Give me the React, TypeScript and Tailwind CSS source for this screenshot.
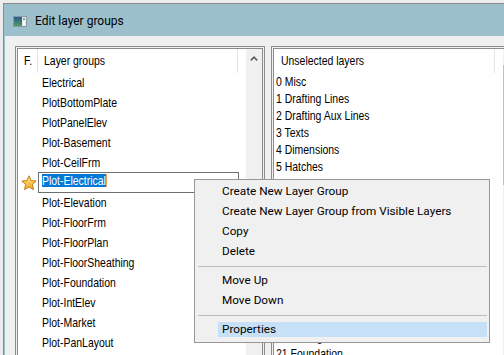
import React from "react";

const groups = [
  "Electrical",
  "PlotBottomPlate",
  "PlotPanelElev",
  "Plot-Basement",
  "Plot-CeilFrm",
  "Plot-Electrical",
  "Plot-Elevation",
  "Plot-FloorFrm",
  "Plot-FloorPlan",
  "Plot-FloorSheathing",
  "Plot-Foundation",
  "Plot-IntElev",
  "Plot-Market",
  "Plot-PanLayout",
  "Plot-Roof",
];

const layers = [
  "0 Misc",
  "1 Drafting Lines",
  "2 Drafting Aux Lines",
  "3 Texts",
  "4 Dimensions",
  "5 Hatches",
  "6 Drawing Grid Lines",
  "7 Reference Lines",
  "8 Symbols",
  "9 Notes",
  "10 Site",
  "11 Structure",
  "12 Walls",
  "13 Roof",
  "14 Floor",
  "20 Ceiling",
  "21 Foundation",
  "22 Framing",
];

const menuItems: (string | null)[] = [
  "Create New Layer Group",
  "Create New Layer Group from Visible Layers",
  "Copy",
  "Delete",
  null,
  "Move Up",
  "Move Down",
  null,
];

// narrow list text (Arial Narrow look from Liberation Sans)
function N({ children }: { children: React.ReactNode }) {
  return <span className="inline-block origin-left scale-x-[0.82] whitespace-nowrap">{children}</span>;
}

function TitleIcon() {
  return (
    <svg width="14" height="11" viewBox="0 0 14 11">
      <defs>
        <linearGradient id="ti" x1="0" y1="0" x2="0" y2="1">
          <stop offset="0" stopColor="#2d5a8c" />
          <stop offset="1" stopColor="#4f9a63" />
        </linearGradient>
      </defs>
      <rect x="0.5" y="0.5" width="13" height="10" fill="#e4e8ea" stroke="#8c99a3" />
      <rect x="1" y="1" width="8" height="9" fill="url(#ti)" />
      <rect x="10" y="2" width="2" height="2" fill="#7fb07f" />
      <rect x="10" y="5" width="2" height="4" fill="#ffffff" />
    </svg>
  );
}

function Star() {
  return (
    <svg width="16" height="16" viewBox="0 0 16 16">
      <defs>
        <linearGradient id="st" x1="0" y1="0" x2="0" y2="1">
          <stop offset="0" stopColor="#ffe98a" />
          <stop offset="1" stopColor="#f2a51f" />
        </linearGradient>
      </defs>
      <polygon
        points="8,0.8 10.1,5.6 15.2,6 11.3,9.4 12.5,14.6 8,11.9 3.5,14.6 4.7,9.4 0.8,6 5.9,5.6"
        fill="url(#st)"
        stroke="#c47a16"
        strokeWidth="1"
        strokeLinejoin="round"
      />
    </svg>
  );
}

function ChevronUp() {
  return (
    <svg width="8" height="5" viewBox="0 0 8 5">
      <path d="M0.8 4.4 L4 1.2 L7.2 4.4" fill="none" stroke="#606060" strokeWidth="1.6" />
    </svg>
  );
}

export default function App() {
  return (
    <div className="w-[504px] h-[355px] overflow-hidden bg-[#ececec] pt-[3px] pl-[3px] relative">
      <div className="h-[400px] border-l border-t border-[#8c8c8c] bg-[#9bc0cc] flex flex-col">
        {/* title bar */}
        <div className="h-[32px] shrink-0 flex items-center pl-[9px] gap-[8px] pt-[2px]">
          <TitleIcon />
          <span className="text-[12px] text-black font-['Roboto',sans-serif]">Edit layer groups</span>
        </div>

        {/* dialog body */}
        <div className="flex-1 ml-px bg-[#f0f0f0] pt-[10px] pl-[10px] flex gap-[6px] font-['Liberation_Sans','Arial',sans-serif] text-[12.75px] text-black">
          {/* layer groups list */}
          <div className="w-[250px] h-[360px] shrink-0 border-[3px] border-double border-[#8c8c8c] bg-white bg-clip-padding flex">
            <div className="w-[228px] shrink-0 flex flex-col">
              <div className="h-[24px] shrink-0 flex">
                <div className="w-[19px] pl-[6px] flex items-center">
                  <N>F.</N>
                </div>
                <div className="w-px h-full bg-[#e5e5e5]" />
                <div className="w-[199px] pl-[6px] flex items-center">
                  <N>Layer groups</N>
                </div>
                <div className="w-px h-full bg-[#e5e5e5]" />
              </div>
              {groups.map((g) =>
                g === "Plot-Electrical" ? (
                  <div key={g} className="h-[20px] flex items-start">
                    <div className="w-[20px] h-[20px] flex items-center justify-center pl-[1px]">
                      <Star />
                    </div>
                    <div className="w-[201px] h-[21px] -mt-px border border-[#6e6e6e] bg-white pl-[3px] pt-[1px] flex items-start">
                      <div className="flex origin-left scale-x-[0.82] whitespace-nowrap">
                        <span className="h-[13px] leading-[13px] bg-[#0078d7] text-white">{g}</span>
                        <span className="w-[1.22px] h-[13px] bg-[#f08020]" />
                      </div>
                    </div>
                  </div>
                ) : (
                  <div key={g} className="h-[20px] flex items-center">
                    <div className="w-[20px]" />
                    <div className="pl-[4px]">
                      <N>{g}</N>
                    </div>
                  </div>
                )
              )}
            </div>
            <div className="w-[16px] shrink-0 bg-[#f0f0f0] flex flex-col items-center pt-[7px]">
              <ChevronUp />
            </div>
          </div>

          {/* unselected layers list */}
          <div className="w-[260px] h-[360px] shrink-0 border-[3px] border-double border-[#8c8c8c] bg-white bg-clip-padding flex">
            <div className="w-[229px] shrink-0 flex flex-col">
              <div className="h-[24px] shrink-0 flex">
                <div className="w-[220px] pl-[7px] flex items-center">
                  <N>Unselected layers</N>
                </div>
                <div className="w-px h-full bg-[#e5e5e5]" />
              </div>
              {layers.map((l) => (
                <div key={l} className="h-[17px] shrink-0 flex items-center pl-[2px]">
                  <N>{l}</N>
                </div>
              ))}
            </div>
            <div className="w-[17px] shrink-0 bg-[#f0f0f0] flex flex-col pt-[16px]">
              <div className="h-[120px] bg-[#c1c1c1]" />
            </div>
          </div>
        </div>
      </div>

      {/* context menu */}
      <div className="absolute left-[194px] top-[179px] w-[296px] h-[164px] border border-[#979797] bg-[#f0f0f0] py-[2px] font-['Roboto',sans-serif] text-[11.75px] text-black">
        {menuItems.map((m, i) =>
          m === null ? (
            <div key={i} className="h-[9px] pt-[4px] ml-[3px] mr-[2px]">
              <div className="h-px bg-[#bdbdbd]" />
            </div>
          ) : (
            <div key={i} className="h-[20px] flex items-center pl-[27px]">
              {m}
            </div>
          )
        )}
        <div className="h-[20px] pt-[2px]">
          <div className="h-[15px] ml-[23px] mr-[2px] bg-[#c5e0f7] flex items-center pl-[4px]">Properties</div>
        </div>
      </div>
    </div>
  );
}
